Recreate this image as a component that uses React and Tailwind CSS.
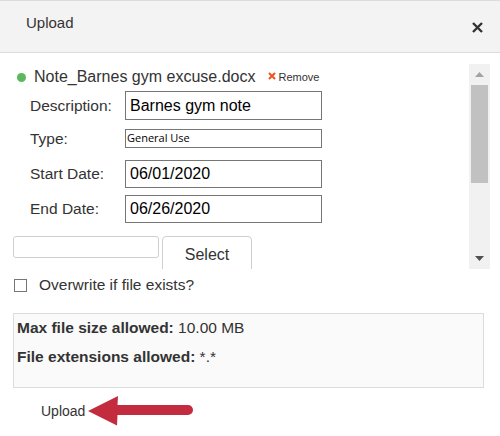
import React from 'react';

const FONT = { fontFamily: '"Liberation Sans", Arial, sans-serif' };

const Field = ({ label, value, className, inputClass }) => (
  <div className={`flex items-center ${className}`}>
    <div className="w-[112px] pl-[17px] text-[15.5px] leading-[18px] text-[#333]">{label}</div>
    <div
      className={`w-[197px] flex items-center border border-[#767676] bg-white text-black ${inputClass}`}
    >
      {value}
    </div>
  </div>
);

export default function App() {
  return (
    <div className="w-[500px] h-[436px] overflow-hidden bg-white" style={FONT}>
      {/* header */}
      <div className="flex items-start justify-between h-[53px] border-t border-b border-[#dcdcdc] bg-[#f3f3f3] pl-[26px] pr-[17px]">
        <div className="mt-[13px] text-[15px] leading-[17px] text-[#333]">Upload</div>
        <svg className="mt-[21px]" width="11" height="11" viewBox="0 0 11 11">
          <path d="M1 1 L10 10 M10 1 L1 10" stroke="#333" strokeWidth="2.4" />
        </svg>
      </div>

      <div className="pl-[13px] pr-[10px]">
        {/* scroll area */}
        <div className="mt-[11px] h-[205px] flex">
          <div className="flex-1 overflow-hidden">
            <div className="mt-[4px] h-[18px] flex items-center">
              <span className="ml-[4px] w-[9px] h-[9px] rounded-full bg-[#5cb85c]" />
              <span className="ml-[8px] text-[16px] leading-[18px] text-[#333]">
                Note_Barnes gym excuse.docx
              </span>
              <span className="ml-[13px] flex items-center text-[11px] leading-[14px] text-[#333]">
                <svg width="8" height="8" viewBox="0 0 8 8" className="mr-[2px] mb-[2px]">
                  <path d="M1 1 L7 7 M7 1 L1 7" stroke="#f0521f" strokeWidth="2" />
                </svg>
                Remove
              </span>
            </div>

            <Field
              label="Description:"
              value="Barnes gym note"
              className="mt-[5px]"
              inputClass="h-[29px] pl-[4px] text-[16px]"
            />
            <Field
              label="Type:"
              value={<span style={{ fontFamily: '"Open Sans", sans-serif' }}>General Use</span>}
              className="mt-[9px]"
              inputClass="h-[19px] pl-[1px] text-[11px]"
            />
            <Field
              label="Start Date:"
              value="06/01/2020"
              className="mt-[12px]"
              inputClass="h-[28px] pl-[4px] text-[16px]"
            />
            <Field
              label="End Date:"
              value="06/26/2020"
              className="mt-[7px]"
              inputClass="h-[28px] pl-[4px] text-[16px]"
            />

            <div className="mt-[13px] flex items-start">
              <div className="w-[146px] h-[22px] rounded-[3px] border border-[#cfcfcf] bg-white" />
              <div className="ml-[3px] w-[90px] h-[38px] flex items-center justify-center rounded-t-[4px] border border-[#cfcfcf] bg-white text-[16px] text-[#333]">
                Select
              </div>
            </div>
          </div>

          {/* scrollbar */}
          <div className="w-[21px] flex flex-col bg-[#f1f1f1]">
            <div className="h-[21px] flex items-center justify-center">
              <svg width="9" height="5" viewBox="0 0 9 5">
                <path d="M0 5 L4.5 0 L9 5 Z" fill="#a3a3a3" />
              </svg>
            </div>
            <div className="mx-[2px] h-[98px] bg-[#c1c1c1]" />
            <div className="flex-1" />
            <div className="h-[21px] flex items-center justify-center">
              <svg width="9" height="5" viewBox="0 0 9 5">
                <path d="M0 0 L9 0 L4.5 5 Z" fill="#505050" />
              </svg>
            </div>
          </div>
        </div>

        {/* overwrite */}
        <div className="mt-[7px] h-[18px] flex items-center">
          <span className="ml-[1px] w-[13px] h-[13px] border border-[#767676] bg-white" />
          <span className="ml-[12px] text-[15.5px] leading-[18px] text-[#333]">
            Overwrite if file exists?
          </span>
        </div>

        {/* info */}
        <div className="mt-[19px] w-[471px] h-[75px] border border-[#dcdcdc] bg-[#fafafa] pl-[3px] pt-[5px] text-[15.5px] leading-[18px] text-[#333]">
          <p>
            <b>Max file size allowed:</b> 10.00 MB
          </p>
          <p className="mt-[11px]">
            <b>File extensions allowed:</b> *.*
          </p>
        </div>

        {/* upload link */}
        <div className="mt-[8px] h-[30px] flex items-center">
          <span className="ml-[28px] text-[14px] text-[#333]">Upload</span>
          <svg className="ml-[3px]" width="106" height="30" viewBox="0 0 106 30">
            <path
              d="M0 15 L30 0 L29.5 9 L100 9 A5 5 0 0 1 100 19 L29.5 19 L29 29.5 Z"
              fill="#c22c3e"
            />
          </svg>
        </div>
      </div>
    </div>
  );
}
